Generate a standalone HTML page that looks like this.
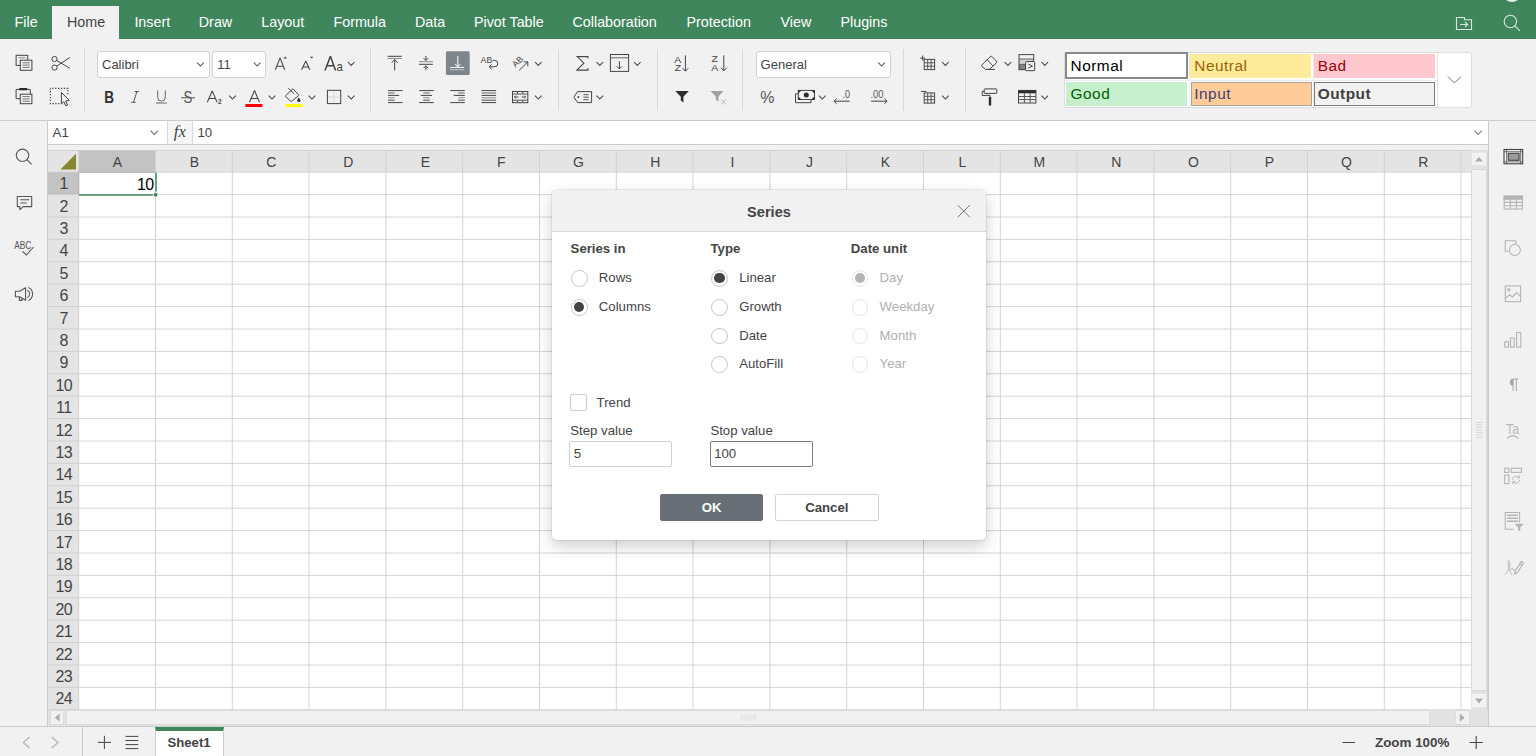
<!DOCTYPE html>
<html lang="en"><head><meta charset="utf-8"><title>Spreadsheet Editor</title>
<style>
*{box-sizing:border-box;margin:0;padding:0}
html,body{width:1536px;height:756px;overflow:hidden;background:#f1f1f1;font-family:"Liberation Sans",sans-serif;font-size:13.2px;color:#444}
.a{position:absolute}
svg{position:absolute;overflow:visible}
#top{left:0;top:0;width:1536px;height:39px;background:#40865c}
#top .tab{position:absolute;top:6px;height:34px;line-height:33.6px;font-size:14.3px;color:#fff;white-space:nowrap}
#top .tab.on{background:#f1f1f1;color:#444}
#tb{left:0;top:39px;width:1536px;height:82px;background:#f1f1f1;border-bottom:1px solid #cbcbcb}
.sep{position:absolute;top:49px;width:1px;height:62px;background:#d8d8d8}
.box{position:absolute;top:51px;height:27px;background:#fff;border:1px solid #d2d2d2;border-radius:3px;font-size:13px;line-height:25.2px;color:#444;padding-left:4px;white-space:nowrap}
.ic{position:absolute;width:24px;height:24px;color:#444}
.ic svg{left:0;top:0}

#styles{left:1064.2px;top:51.6px;width:407.4px;height:56px;background:#fff;border:1px solid #dcdcdc;border-radius:2px}
.st{position:absolute;height:24.4px;width:120.6px;font-size:15.4px;line-height:24.6px;padding-left:3.6px;white-space:nowrap;letter-spacing:.5px}
#fbar{left:48px;top:121px;width:1440px;height:24px;background:#fff;border-bottom:1px solid #cbcbcb}
#lside{left:0;top:121px;width:48px;height:605px;background:#f1f1f1;border-right:1px solid #cbcbcb}
#rside{left:1488px;top:121px;width:48px;height:605px;background:#f1f1f1;border-left:1px solid #cbcbcb}
#status{left:0;top:726px;width:1536px;height:30px;background:#f1f1f1;border-top:1px solid #cbcbcb}
#sheet{left:48px;top:150px;width:1423px;height:560px;background:#fff;overflow:hidden}
.ch{position:absolute;top:0;height:22px;line-height:23px;text-align:center;font-size:15.2px;color:#444;transform:scaleX(.92)}
.rh{position:absolute;left:0.6px;width:30.4px;text-align:center;font-size:16px;color:#444;height:22.4px;line-height:24.2px;letter-spacing:-0.5px}
#dlg{left:551.6px;top:190.4px;width:434.8px;height:349.8px;background:#fff;border-radius:5px;box-shadow:0 6px 16px rgba(0,0,0,.2),0 0 0 1px rgba(0,0,0,.06)}
#dlg .hd{position:absolute;left:0;top:0;width:100%;height:41.4px;background:#f1f1f1;border-bottom:1px solid #d8d8d8;border-radius:5px 5px 0 0;text-align:center;font-weight:bold;font-size:14.6px;line-height:44.6px;color:#444}
#dlg .lb{position:absolute;font-weight:bold;font-size:13.2px;white-space:nowrap;color:#444}
#dlg .tx{position:absolute;font-size:13.2px;white-space:nowrap;color:#444}
#dlg .dis{color:#b0b0b0}
.rad{position:absolute;width:16.8px;height:16.8px;border:1px solid #c6c6c6;border-radius:50%;background:#fff}
.rad.on::after{content:"";position:absolute;left:2.3px;top:2.3px;width:10.2px;height:10.2px;border-radius:50%;background:#444}
.rad.dis{border-color:#e6e6e6}
.rad.dis.on::after{background:#b4b4b4}
.inp{position:absolute;height:26.4px;background:#fff;border:1px solid #cfcfcf;border-radius:2px;font-size:13.2px;line-height:24px;padding-left:3.4px;color:#444}
.btn{position:absolute;height:26.4px;border-radius:2px;font-weight:bold;font-size:13.2px;text-align:center;line-height:25.5px}
</style></head>
<body>
<div id="top" class="a">
<div class="tab" style="left:14.6px">File</div>
<div class="tab on" style="left:52px;width:67px;padding-left:15.0px">Home</div>
<div class="tab" style="left:134.4px">Insert</div>
<div class="tab" style="left:198.8px">Draw</div>
<div class="tab" style="left:261.3px">Layout</div>
<div class="tab" style="left:333.5px">Formula</div>
<div class="tab" style="left:415.0px">Data</div>
<div class="tab" style="left:474.0px">Pivot Table</div>
<div class="tab" style="left:572.5px">Collaboration</div>
<div class="tab" style="left:686.5px">Protection</div>
<div class="tab" style="left:780.5px">View</div>
<div class="tab" style="left:840.5px">Plugins</div>
<svg class="a" style="left:0;top:0" width="1" height="1"><g fill="none" stroke="#d9e7df" stroke-width="1.1"><path d="M1456.5 29.5V17.5H1464.5V19.8H1471.5V29.5Z"/><path d="M1460 24.5H1467.5M1465 22L1467.7 24.5L1465 27"/><circle cx="1510.4" cy="21.5" r="6.2"/><path d="M1514.8 25.9L1519.8 30.9"/></g><ellipse cx="1512" cy="-4" rx="7.5" ry="6" fill="#e9f1ec"/></svg>
</div>
<div id="tb" class="a"></div>
<div class="sep" style="left:84.0px"></div>
<div class="sep" style="left:370.0px"></div>
<div class="sep" style="left:557.6px"></div>
<div class="sep" style="left:656.9px"></div>
<div class="sep" style="left:742.0px"></div>
<div class="sep" style="left:902.9px"></div>
<div class="sep" style="left:964.9px"></div>
<div class="box" style="left:97px;width:112.5px">Calibri</div>
<div class="box" style="left:212.3px;width:54px">11</div>
<div class="box" style="left:755.6px;width:135px">General</div>
<svg class="a" style="left:0;top:0" width="1" height="1" aria-label="toolbar icons"><rect x="16.10" y="55.30" width="11.60" height="10.10" fill="none" stroke="#444" stroke-width="1" /><path d="M18.6 57.8H25.4" fill="none" stroke="#8c8c8c" stroke-width="1" /><rect x="20.30" y="60.20" width="11.60" height="10.10" fill="#f1f1f1" stroke="#444" stroke-width="1" /><path d="M22.5 62.8H29.8M22.5 65.1H29.8M22.5 67.4H29.8" fill="none" stroke="#777" stroke-width="1" /><path d="M20.3 98.7H16.1V89.4H30.3V94" fill="none" stroke="#444" stroke-width="1" /><rect x="19.3" y="88" width="7.9" height="2.3" fill="#2a2a2a"/><rect x="20.30" y="94.20" width="11.60" height="9.50" fill="#f1f1f1" stroke="#444" stroke-width="1" /><path d="M22.5 96.6H29.8M22.5 98.9H29.8M22.5 101.2H29.8" fill="none" stroke="#777" stroke-width="1" /><circle cx="54.5" cy="59" r="2.6" fill="none" stroke="#444"/><circle cx="54.5" cy="67.6" r="2.6" fill="none" stroke="#444"/><path d="M56.7 60.5L69.9 68.3M56.7 66.1L69.9 57.5" fill="none" stroke="#444" stroke-width="1" /><path d="M59.5 103.6H50.4V88.4H67.9V96" fill="none" stroke="#444" stroke-width="1.1" stroke-dasharray="1.3 1.6"/><path d="M61.4 92.4V104L63.9 101.7L65.7 105.8L67.5 105L65.7 101L69.3 100.4Z" fill="#f1f1f1" stroke="#444" stroke-width="1" stroke-linejoin="round"/><path d="M275.3 69.8L280.1 57.9L284.7 69.8M276.75 66.2H283.31" fill="none" stroke="#444" stroke-width="1.05" stroke-linejoin="bevel"/><path d="M283.4 58.4L285.2 56.6L287 58.4Z" fill="#444" /><path d="M301.6 69.8L305.8 61L309.8 69.8M302.98 66.9H308.48" fill="none" stroke="#444" stroke-width="1.05" stroke-linejoin="bevel"/><path d="M309.8 56.8H313.4L311.6 58.6Z" fill="#444" /><path d="M325 70.5L330.4 56.2L335.6 70.5M326.77 65.8H333.89" fill="none" stroke="#444" stroke-width="1.5" stroke-linejoin="bevel"/><text x="336.6" y="70.5" font-family="Liberation Sans" font-size="13.2" font-weight="normal" fill="#444" textLength="6.4" lengthAdjust="spacingAndGlyphs">a</text><path d="M347.90 62.00L351.20 65.40L354.50 62.00" fill="none" stroke="#444" stroke-width="1.05" /><text x="104.2" y="102.5" font-family="Liberation Sans" font-size="16" font-weight="bold" fill="#333" textLength="9.8" lengthAdjust="spacingAndGlyphs">B</text><path d="M134.6 91.6H139M131.3 102.3H135.7M136.9 91.6L133.5 102.3" fill="none" stroke="#555" stroke-width="1" /><path d="M157.7 90.4V97.3A3.8 3.8 0 0 0 165.3 97.3V90.4M156.2 103H166.8" fill="none" stroke="#666" stroke-width="1" /><text x="183.6" y="102.8" font-family="Liberation Sans" font-size="16.6" font-weight="normal" fill="#555" textLength="8.8" lengthAdjust="spacingAndGlyphs">S</text><path d="M181 97.8H195" fill="none" stroke="#555" stroke-width="1" /><path d="M207.3 102.3L212.2 91L217.1 102.3M208.95 98.5H215.45" fill="none" stroke="#444" stroke-width="1.05" stroke-linejoin="bevel"/><text x="217.9" y="103.8" font-family="Liberation Sans" font-size="6.4" font-weight="bold" fill="#444" >2</text><path d="M229.20 95.60L232.50 99.00L235.80 95.60" fill="none" stroke="#444" stroke-width="1.05" /><path d="M249.5 102.3L254.5 90.5L259.5 102.3M251.15 98.4H257.85" fill="none" stroke="#444" stroke-width="1.05" stroke-linejoin="bevel"/><rect x="245.4" y="104" width="17" height="3" fill="#ff0000"/><path d="M268.70 95.60L272.00 99.00L275.30 95.60" fill="none" stroke="#444" stroke-width="1.05" /><path d="M293.4 89.2L298.4 94.6Q299 95.3 298.3 95.9L291.9 101.1Q291.1 101.6 290.5 101L285.8 96.7Q285.2 96.1 285.8 95.5L292.4 89.2Q292.9 88.8 293.4 89.2Z" fill="none" stroke="#444" stroke-width="1" stroke-linejoin="round"/><path d="M288.2 88.1L294.1 93.7" fill="none" stroke="#444" stroke-width="1" /><path d="M298.8 97.6Q300.4 99.6 300.4 100.4A1.6 1.6 0 0 1 297.2 100.4Q297.2 99.6 298.8 97.6Z" fill="#333"/><rect x="285.5" y="104" width="17" height="3.1" fill="#ffff00"/><path d="M308.60 95.60L311.90 99.00L315.20 95.60" fill="none" stroke="#444" stroke-width="1.05" /><rect x="327.40" y="90.30" width="13.30" height="13.30" fill="none" stroke="#444" stroke-width="1" /><path d="M334 91.5V102.5M328.5 97H339.5" fill="none" stroke="#c9c9c9" stroke-width="1" stroke-dasharray="1.6 1.2"/><path d="M347.90 95.60L351.20 99.00L354.50 95.60" fill="none" stroke="#444" stroke-width="1.05" /><path d="M387.7 56.3H401.8" fill="none" stroke="#444" stroke-width="1" /><path d="M387.7 58.5H401.8" fill="none" stroke="#8c8c8c" stroke-width="1" /><path d="M394.7 70.3V59.6M391.8 62.7L394.7 59.6L397.6 62.7" fill="none" stroke="#444" stroke-width="1" /><path d="M419 61.7H432.9" fill="none" stroke="#8c8c8c" stroke-width="1" /><path d="M419 64.3H432.9" fill="none" stroke="#444" stroke-width="1" /><path d="M425.9 56V60.4M423.6 58.2L425.9 60.5L428.2 58.2M425.9 70.3V65.9M423.6 68.1L425.9 65.8L428.2 68.1" fill="none" stroke="#444" stroke-width="1" /><rect x="445.9" y="51.2" width="23.8" height="23.8" rx="1.5" fill="#7d858d"/><path d="M457.8 56V66.8M454.9 63.8L457.8 66.9L460.7 63.8" fill="none" stroke="#fff" stroke-width="1" /><path d="M450.1 67.4H464.1" fill="none" stroke="#fff" stroke-width="1" /><path d="M450.1 69.8H464.1" fill="none" stroke="#c5c9cd" stroke-width="1" /><text x="480.6" y="62.8" font-family="Liberation Sans" font-size="8.6" font-weight="normal" fill="#444" textLength="11.6" lengthAdjust="spacingAndGlyphs">AB</text><path d="M492.6 60.4H494.6A3.2 3.2 0 0 1 494.6 66.8H489.4M491.8 64.3L489.2 66.8L491.8 69.3" fill="none" stroke="#444" stroke-width="1" /><g transform="rotate(-45 517.6 61.6)"><text x="511.8" y="64.6" font-family="Liberation Sans" font-size="8.6" font-weight="normal" fill="#444" textLength="11.6" lengthAdjust="spacingAndGlyphs">AB</text></g><path d="M519.2 70.3L527.6 62.1M523.6 61.9H527.8V66.1" fill="none" stroke="#444" stroke-width="1" /><path d="M535.00 62.00L538.30 65.40L541.60 62.00" fill="none" stroke="#444" stroke-width="1.05" /><path d="M388.0 90.6H402.5" fill="none" stroke="#444" stroke-width="1" /><path d="M388.0 93.0H394.5" fill="none" stroke="#666" stroke-width="1" /><path d="M388.0 95.4H399.2" fill="none" stroke="#444" stroke-width="1" /><path d="M388.0 97.8H394.5" fill="none" stroke="#8c8c8c" stroke-width="1" /><path d="M388.0 100.2H394.5" fill="none" stroke="#555" stroke-width="1" /><path d="M388.0 102.6H402.5" fill="none" stroke="#444" stroke-width="1" /><path d="M419.2 90.6H433.7" fill="none" stroke="#444" stroke-width="1" /><path d="M423.2 93.0H429.7" fill="none" stroke="#666" stroke-width="1" /><path d="M420.8 95.4H432.1" fill="none" stroke="#444" stroke-width="1" /><path d="M423.2 97.8H429.7" fill="none" stroke="#8c8c8c" stroke-width="1" /><path d="M423.2 100.2H429.7" fill="none" stroke="#555" stroke-width="1" /><path d="M419.2 102.6H433.7" fill="none" stroke="#444" stroke-width="1" /><path d="M450.3 90.6H464.8" fill="none" stroke="#444" stroke-width="1" /><path d="M458.3 93.0H464.8" fill="none" stroke="#666" stroke-width="1" /><path d="M453.6 95.4H464.8" fill="none" stroke="#444" stroke-width="1" /><path d="M458.3 97.8H464.8" fill="none" stroke="#8c8c8c" stroke-width="1" /><path d="M458.3 100.2H464.8" fill="none" stroke="#555" stroke-width="1" /><path d="M450.3 102.6H464.8" fill="none" stroke="#444" stroke-width="1" /><path d="M481.6 90.6H496.1" fill="none" stroke="#444" stroke-width="1" /><path d="M481.6 93.0H496.1" fill="none" stroke="#666" stroke-width="1" /><path d="M481.6 95.4H496.1" fill="none" stroke="#444" stroke-width="1" /><path d="M481.6 97.8H496.1" fill="none" stroke="#8c8c8c" stroke-width="1" /><path d="M481.6 100.2H496.1" fill="none" stroke="#555" stroke-width="1" /><path d="M481.6 102.6H496.1" fill="none" stroke="#444" stroke-width="1" /><rect x="512.50" y="91.50" width="15.30" height="11.20" fill="none" stroke="#444" stroke-width="1" /><path d="M512.5 94H527.8M512.5 100.2H527.8M517.5 91.5V94M522.8 91.5V94M517.5 100.2V102.7M522.8 100.2V102.7" fill="none" stroke="#555" stroke-width="1" /><path d="M514.4 97H518.6M521.4 97H525.6M515.8 95.6L514.4 97L515.8 98.4M524.2 95.6L525.6 97L524.2 98.4" fill="none" stroke="#444" stroke-width="0.9" /><path d="M535.00 95.60L538.30 99.00L541.60 95.60" fill="none" stroke="#444" stroke-width="1.05" /><path d="M588 58.6V56.6H577.2L583.9 63.2L576.8 70.1H588V68" fill="none" stroke="#444" stroke-width="1.05" stroke-linejoin="miter"/><path d="M596.50 62.00L599.80 65.40L603.10 62.00" fill="none" stroke="#444" stroke-width="1.05" /><rect x="610.40" y="54.50" width="18.20" height="16.90" fill="none" stroke="#444" stroke-width="1" /><path d="M610.4 57.8H628.6" fill="none" stroke="#666" stroke-width="1" /><path d="M619.4 61.2V68.8M616.9 66.4L619.4 68.9L621.9 66.4" fill="none" stroke="#444" stroke-width="1" /><path d="M634.00 62.00L637.30 65.40L640.60 62.00" fill="none" stroke="#444" stroke-width="1.05" /><path d="M577.6 91.6H591.6V102.6H577.6L573.9 97.1Z" fill="none" stroke="#444" stroke-width="1" stroke-linejoin="round"/><circle cx="578.3" cy="97.1" r="1" fill="#444"/><path d="M583.4 94.7H588.7M583.4 97.2H588.7M583.4 99.7H588.7" fill="none" stroke="#555" stroke-width="1" /><path d="M596.50 95.60L599.80 99.00L603.10 95.60" fill="none" stroke="#444" stroke-width="1.05" /><text x="674.3" y="62.5" font-family="Liberation Sans" font-size="8.8" font-weight="normal" fill="#444" textLength="7" lengthAdjust="spacingAndGlyphs">A</text><text x="674.7" y="71.4" font-family="Liberation Sans" font-size="8.8" font-weight="normal" fill="#444" textLength="6.4" lengthAdjust="spacingAndGlyphs">Z</text><path d="M685.4 55.4V71M682.5 68.2L685.4 71.2L688.3 68.2" fill="none" stroke="#444" stroke-width="1" /><text x="711.6" y="62.3" font-family="Liberation Sans" font-size="8.8" font-weight="normal" fill="#444" textLength="6.4" lengthAdjust="spacingAndGlyphs">Z</text><text x="711.2" y="71.2" font-family="Liberation Sans" font-size="8.8" font-weight="normal" fill="#444" textLength="7" lengthAdjust="spacingAndGlyphs">A</text><path d="M723.8 55.4V70.6M720.9 67.8L723.8 70.8L726.7 67.8" fill="none" stroke="#444" stroke-width="1" /><path d="M675.3 90.9H688.8L683.4 96.8V102.4L680.8 100.4V96.8Z" fill="#2d2d2d" /><path d="M710.5 90.9H723.6L718.4 96.6V101.4L715.8 99.6V96.6Z" fill="#a0a0a0" /><path d="M721.2 99.6L725.8 104.2M725.8 99.6L721.2 104.2" fill="none" stroke="#b4b4b4" stroke-width="1" /><text x="760.2" y="103" font-family="Liberation Sans" font-size="16.4" font-weight="normal" fill="#555" textLength="14.2" lengthAdjust="spacingAndGlyphs">%</text><path d="M798.3 93.8H795.5V102.7H811V99.6" fill="none" stroke="#444" stroke-width="1" /><rect x="798.30" y="90.40" width="16.20" height="9.10" fill="#f1f1f1" stroke="#444" stroke-width="1" /><path d="M798.3 90.4H801.5L798.3 93.4ZM814.5 90.4H811.3L814.5 93.4ZM798.3 99.5H801.5L798.3 96.5ZM814.5 99.5H811.3L814.5 96.5Z" fill="#2d2d2d" /><ellipse cx="806.3" cy="95" rx="2.5" ry="2.5" fill="#2d2d2d"/><path d="M819.00 95.60L822.30 99.00L825.60 95.60" fill="none" stroke="#444" stroke-width="1.05" /><text x="842.6" y="97.7" font-family="Liberation Sans" font-size="10" font-weight="normal" fill="#555" textLength="7.6" lengthAdjust="spacingAndGlyphs">.0</text><path d="M849.6 101.2H834M836.7 98.5L833.9 101.2L836.7 103.9" fill="none" stroke="#444" stroke-width="1" /><text x="870.4" y="97.7" font-family="Liberation Sans" font-size="10" font-weight="normal" fill="#555" textLength="13" lengthAdjust="spacingAndGlyphs">.00</text><path d="M871.1 101.2H887M884.3 98.5L887.1 101.2L884.3 103.9" fill="none" stroke="#444" stroke-width="1" /><rect x="924.20" y="59.40" width="10.40" height="10.20" fill="none" stroke="#444" stroke-width="1" /><path d="M924.2 62.8H934.6M924.2 66.2H934.6M927.7 59.4V69.6M931.1 59.4V69.6" fill="none" stroke="#555" stroke-width="1" /><path d="M920.2 58.1H925.2M922.7 55.6V60.6" fill="none" stroke="#444" stroke-width="1" /><path d="M942.10 62.00L945.40 65.40L948.70 62.00" fill="none" stroke="#444" stroke-width="1.05" /><rect x="924.20" y="92.90" width="10.40" height="10.20" fill="none" stroke="#444" stroke-width="1" /><path d="M924.2 96.3H934.6M924.2 99.7H934.6M927.7 92.9V103.10000000000001M931.1 92.9V103.10000000000001" fill="none" stroke="#555" stroke-width="1" /><path d="M921 91.4H926.4" fill="none" stroke="#444" stroke-width="1" /><path d="M942.10 95.60L945.40 99.00L948.70 95.60" fill="none" stroke="#444" stroke-width="1.05" /><path d="M990.4 56.6Q991.3 55.8 992.2 56.7L996.4 61.1Q997.2 62 996.4 62.9L989.4 69.4H985.4L982 66.6Q981.1 65.7 982 64.8Z" fill="none" stroke="#444" stroke-width="1" stroke-linejoin="round"/><path d="M987.2 59.7L992.8 65.8M988 69.4H994.8" fill="none" stroke="#444" stroke-width="1" /><path d="M1004.60 62.00L1007.90 65.40L1011.20 62.00" fill="none" stroke="#444" stroke-width="1.05" /><rect x="1019" y="59" width="14.7" height="5.4" fill="#d0d0d0"/><rect x="1019" y="64.4" width="14.7" height="5.3" fill="#808080"/><rect x="1019.00" y="54.60" width="14.70" height="15.10" fill="none" stroke="#444" stroke-width="1" /><path d="M1019 59H1033.7M1019 64.4H1033.7" fill="none" stroke="#666" stroke-width="1" /><rect x="1025.60" y="61.60" width="9.10" height="9.10" fill="#f1f1f1" stroke="#444" stroke-width="1" rx="0.8"/><path d="M1028.2 64L1032.4 66.1L1028.2 68.2" fill="none" stroke="#444" stroke-width="1" /><path d="M1041.50 62.00L1044.80 65.40L1048.10 62.00" fill="none" stroke="#444" stroke-width="1.05" /><rect x="984.20" y="88.90" width="12.60" height="4.50" fill="none" stroke="#444" stroke-width="1" rx="0.6"/><path d="M984.2 91.4H982.2V95.4H990V97.4" fill="none" stroke="#444" stroke-width="1" /><rect x="988.8" y="97" width="2.4" height="8.6" rx="0.6" fill="#2d2d2d"/><rect x="1018.50" y="90.40" width="17.40" height="12.60" fill="none" stroke="#444" stroke-width="1" /><rect x="1018.5" y="90.4" width="17.4" height="2.9" fill="#2d2d2d"/><path d="M1018.5 96.5H1035.9M1018.5 99.6H1035.9M1024.4 93.2V103M1030.1 93.2V103" fill="none" stroke="#555" stroke-width="1" /><path d="M1041.50 95.60L1044.80 99.00L1048.10 95.60" fill="none" stroke="#444" stroke-width="1.05" /></svg>
<svg class="a" style="left:0;top:0" width="1" height="1"><path d="M197.20 62.70L200.50 66.10L203.80 62.70" fill="none" stroke="#555" stroke-width="1.05" /><path d="M253.90 62.70L257.20 66.10L260.50 62.70" fill="none" stroke="#555" stroke-width="1.05" /><path d="M878.30 62.70L881.60 66.10L884.90 62.70" fill="none" stroke="#555" stroke-width="1.05" /></svg>
<div id="styles" class="a">
<div class="st" style="left:0.2px;top:-0.2px;width:122.6px;height:26.6px;background:#fff;color:#000;font-weight:normal;padding-left:3.2px;line-height:24.2px;border:2px solid #8a8a8a">Normal</div>
<div class="st" style="left:125.2px;top:1.4px;width:120.8px;height:23.6px;background:#ffeb9c;color:#9c6500;font-weight:normal;padding-left:3.9px;line-height:24.0px">Neutral</div>
<div class="st" style="left:248.6px;top:1.4px;width:120.8px;height:23.6px;background:#ffc7ce;color:#9c0006;font-weight:normal;padding-left:3.9px;line-height:24.0px">Bad</div>
<div class="st" style="left:1.2px;top:29px;width:120.4px;height:24.2px;background:#c6efce;color:#006100;font-weight:normal;padding-left:4.2px;line-height:24.4px">Good</div>
<div class="st" style="left:125.4px;top:29.4px;width:121px;height:24px;background:#ffcc99;color:#3f3f76;font-weight:normal;padding-left:2.7px;line-height:21.6px;border:1px solid #a3a3a3">Input</div>
<div class="st" style="left:248.8px;top:29.4px;width:121px;height:24px;background:#f2f2f2;color:#3f3f3f;font-weight:bold;padding-left:2.7px;line-height:21.6px;border:1px solid #7a7a7a">Output</div>
<div class="a" style="left:371.6px;top:0;width:1px;height:54px;background:#e2e2e2"></div>
<div class="a" style="left:0;top:27.4px;width:372px;height:1px;background:#ececec"></div>
<div class="a" style="left:123.9px;top:0;width:1px;height:54px;background:#ececec"></div>
<div class="a" style="left:247.4px;top:0;width:1px;height:54px;background:#ececec"></div>
</div>
<svg class="a" style="left:0;top:0" width="1" height="1"><path d="M1447.90 76.55L1454.40 83.05L1460.90 76.55" fill="none" stroke="#7a7a7a" stroke-width="1"/></svg>
<div id="fbar" class="a"><div class="a" style="left:4.6px;top:0;line-height:23px;font-size:13.2px">A1</div><div class="a" style="left:119px;top:0;width:26px;height:23px;background:#f6f6f6;border-left:1px solid #d8d8d8;border-right:1px solid #d8d8d8;text-align:center;font-family:'Liberation Serif',serif;font-style:italic;font-size:17px;line-height:21px">fx</div><div class="a" style="left:149.4px;top:0;line-height:23px;font-size:13.2px">10</div></div>
<svg class="a" style="left:0;top:0" width="1" height="1"><path d="M150.60 130.70L154.20 134.50L157.80 130.70" fill="none" stroke="#666" stroke-width="1.05"/></svg>
<svg class="a" style="left:0;top:0" width="1" height="1"><path d="M1474.60 130.70L1478.20 134.50L1481.80 130.70" fill="none" stroke="#777" stroke-width="1.05"/></svg>
<div id="lside" class="a"></div>
<div id="rside" class="a"></div>
<svg class="a" style="left:0;top:0" width="1" height="1"><g fill="none" stroke="#555" stroke-width="1.1"><circle cx="22.5" cy="155.3" r="6.2"/><path d="M26.9 159.7L31.6 164.4"/><path stroke-linejoin="round" d="M17.3 196.5H31.7V206.6H23.2L19.8 209.6V206.6H17.3Z"/><path d="M20.3 199.8H29.2M20.3 203H26.6"/><path d="M22.4 251.4L26.4 255L33.6 247"/><path stroke-linejoin="round" d="M15.4 291.3H19.4L25.6 287.8V300.2L19.4 296.8H15.4Z"/><path d="M19.4 297V300.4H22V298.2"/><path d="M27.4 290.3A4.2 4.2 0 0 1 27.4 297.7M28.4 287.6A7 7 0 0 1 28.4 300.4"/></g><text x="14.2" y="249.3" font-family="Liberation Sans" font-size="10.2" fill="#555" textLength="17.2" lengthAdjust="spacingAndGlyphs">ABC</text><g fill="none" stroke="#444" stroke-width="1.1"><rect x="1504" y="149.5" width="18.7" height="14.3"/><path d="M1504 151.7H1522.7M1504 161.9H1522.7M1506.6 149.5V163.8M1520.6 149.5V163.8" stroke-width="0.7"/><rect x="1508.3" y="153.3" width="10.8" height="7" fill="#9a9a9a"/></g><g fill="none" stroke="#b4b4b4" stroke-width="1.1"><rect x="1504.2" y="196.2" width="18.2" height="12.8"/><rect x="1504.2" y="196.2" width="18.2" height="3" fill="#b4b4b4"/><path d="M1504.2 202.4H1522.4M1504.2 205.7H1522.4M1510.3 199V209M1516.4 199V209"/><path d="M1508.6 251.3H1505.3V240.7H1515.8V244"/><circle cx="1514.9" cy="250" r="5.5"/><rect x="1505.3" y="285.9" width="15.3" height="15.8"/><circle cx="1508.8" cy="289.8" r="1.2"/><path d="M1505.3 298.5L1509.6 294.8L1512.4 297L1516.6 292.6L1520.6 296.6"/><rect x="1504.7" y="341.8" width="3.7" height="5.3"/><rect x="1510.5" y="338" width="3.7" height="9.1"/><rect x="1516.6" y="332.5" width="4.2" height="14.6"/><path d="M1507 438.4Q1512.8 432.8 1518.5 438.4"/><rect x="1504.7" y="468.2" width="4.2" height="4.2"/><rect x="1511.2" y="468.2" width="10.2" height="4.2"/><rect x="1504.7" y="475.2" width="4.2" height="8.4"/><path d="M1512.6 479.8A3.6 3.6 0 0 1 1519 477.4M1519.6 479.6A3.6 3.6 0 0 1 1513.2 482M1519.4 475.2V477.8H1516.8M1512.8 484.2V481.6H1515.4" stroke-width="0.9"/><path d="M1514 529.2H1505.3V512.5H1519.6V522.5"/><path d="M1507 515.3H1518M1507 518.3H1518M1507 521.3H1518" stroke-width="1.6"/><path d="M1514.8 523.8H1523.6L1520.2 527.4V531.6L1518.2 530.2V527.4Z" fill="#b4b4b4" stroke="none"/><path d="M1505 574.5C1508 572 1510.4 566 1509.6 561.6C1509.2 559.6 1507.8 560.4 1508 562.6C1508.4 567 1510 572 1512.2 575.4M1510 570.2L1512.4 567.8L1513.6 570.6L1515.4 569.4" stroke-width="0.9"/><path d="M1514.6 574.2L1515.4 570.6L1521.4 561.4L1523.6 563L1517.6 572.2Z" stroke-linejoin="round"/><path d="M1519.8 563.6L1522 565.2"/></g><path d="M1513 386.2A4 4 0 0 1 1513 378.4H1518.2V379.4H1516.8V391H1515.8V379.4H1513.6V391H1512.6V386.2Z" fill="#a6a6a6"/><text x="1506" y="433.5" font-family="Liberation Sans" font-size="14" fill="#b9b9b9" textLength="13.2" lengthAdjust="spacingAndGlyphs">Ta</text></svg>
<div id="sheet" class="a">
<div class="a" style="left:0;top:0;width:1423px;height:22.4px;background:#e4e4e4"></div>
<div class="a" style="left:0;top:0;width:30.6px;height:560px;background:#e4e4e4"></div>
<div class="a" style="left:30.7px;top:0;width:76.8px;height:22.4px;background:#c3c3c3"></div>
<div class="a" style="left:0;top:22.2px;width:30.6px;height:22.4px;background:#c3c3c3"></div>
<svg class="a" style="left:0;top:0" width="1423" height="560"><path d="M30.7 0V560M107.5 0V560M184.3 0V560M261.1 0V560M337.9 0V560M414.7 0V560M491.5 0V560M568.3 0V560M645.1 0V560M721.9 0V560M798.7 0V560M875.5 0V560M952.3 0V560M1029.1 0V560M1105.9 0V560M1182.7 0V560M1259.5 0V560M1336.3 0V560M1413.1 0V560M0 22.2H1423M0 44.6H1423M0 67.0H1423M0 89.4H1423M0 111.8H1423M0 134.2H1423M0 156.6H1423M0 179.0H1423M0 201.4H1423M0 223.8H1423M0 246.2H1423M0 268.6H1423M0 291.0H1423M0 313.4H1423M0 335.8H1423M0 358.2H1423M0 380.6H1423M0 403.0H1423M0 425.4H1423M0 447.8H1423M0 470.2H1423M0 492.6H1423M0 515.0H1423M0 537.4H1423M0 559.8H1423" stroke="#cfcfcf" stroke-width="0.9" fill="none"/><path d="M0 0.3H1423" stroke="#cdcdcd" stroke-width="1" fill="none"/><path d="M30.7 22.2H107.5M30.7 22.2V44.6" stroke="#acacac" stroke-width="1" fill="none"/><path d="M28 3.8V19.6H12.4Z" fill="#86862f"/><path d="M108 22.8V41.6M31.1 45H104.8" stroke="#40865c" stroke-width="1.5" fill="none"/><rect x="105.3" y="42.8" width="4.5" height="4" fill="#3f7d58" stroke="#fff" stroke-width="0.7"/></svg>
<div class="ch" style="left:31.4px;width:76.8px">A</div><div class="ch" style="left:108.2px;width:76.8px">B</div><div class="ch" style="left:185.0px;width:76.8px">C</div><div class="ch" style="left:261.8px;width:76.8px">D</div><div class="ch" style="left:338.6px;width:76.8px">E</div><div class="ch" style="left:415.4px;width:76.8px">F</div><div class="ch" style="left:492.2px;width:76.8px">G</div><div class="ch" style="left:569.0px;width:76.8px">H</div><div class="ch" style="left:645.8px;width:76.8px">I</div><div class="ch" style="left:722.6px;width:76.8px">J</div><div class="ch" style="left:799.4px;width:76.8px">K</div><div class="ch" style="left:876.2px;width:76.8px">L</div><div class="ch" style="left:953.0px;width:76.8px">M</div><div class="ch" style="left:1029.8px;width:76.8px">N</div><div class="ch" style="left:1106.6px;width:76.8px">O</div><div class="ch" style="left:1183.4px;width:76.8px">P</div><div class="ch" style="left:1260.2px;width:76.8px">Q</div><div class="ch" style="left:1337.0px;width:76.8px">R</div>
<div class="rh" style="top:22.2px">1</div><div class="rh" style="top:44.6px">2</div><div class="rh" style="top:67.0px">3</div><div class="rh" style="top:89.4px">4</div><div class="rh" style="top:111.8px">5</div><div class="rh" style="top:134.2px">6</div><div class="rh" style="top:156.6px">7</div><div class="rh" style="top:179.0px">8</div><div class="rh" style="top:201.4px">9</div><div class="rh" style="top:223.8px">10</div><div class="rh" style="top:246.2px">11</div><div class="rh" style="top:268.6px">12</div><div class="rh" style="top:291.0px">13</div><div class="rh" style="top:313.4px">14</div><div class="rh" style="top:335.8px">15</div><div class="rh" style="top:358.2px">16</div><div class="rh" style="top:380.6px">17</div><div class="rh" style="top:403.0px">18</div><div class="rh" style="top:425.4px">19</div><div class="rh" style="top:447.8px">20</div><div class="rh" style="top:470.2px">21</div><div class="rh" style="top:492.6px">22</div><div class="rh" style="top:515.0px">23</div><div class="rh" style="top:537.4px">24</div>
<div class="a" style="left:30.7px;top:22.2px;width:75.2px;height:22.4px;line-height:26.2px;text-align:right;font-size:16px;color:#000;letter-spacing:-0.4px">10</div>
</div>
<div class="a" style="left:1471px;top:150px;width:17px;height:560px;background:#e2e2e2;border-right:1.5px solid #d4d4d4"></div>
<div class="a" style="left:1471.3px;top:151.6px;width:15.4px;height:14.8px;background:#f3f3f3;border:1px solid #e6e6e6;border-radius:1px"></div>
<div class="a" style="left:1471.3px;top:168.6px;width:15.4px;height:522.6px;background:#f1f1f1;border:1px solid #d8d8d8;border-radius:1px"></div>
<div class="a" style="left:1471.3px;top:693.3px;width:15.4px;height:15.2px;background:#f3f3f3;border:1px solid #e6e6e6;border-radius:1px"></div>
<div class="a" style="left:48px;top:710px;width:1440px;height:16px;background:#e2e2e2"></div>
<div class="a" style="left:49.7px;top:710.4px;width:14.4px;height:14.6px;background:#f1f1f1;border:1px solid #dcdcdc;border-radius:1px"></div>
<div class="a" style="left:66.2px;top:710.4px;width:1364.3px;height:14.6px;background:#f1f1f1;border:1px solid #dcdcdc;border-radius:1px"></div>
<div class="a" style="left:1454.6px;top:710.4px;width:15px;height:14.6px;background:#f1f1f1;border:1px solid #dcdcdc;border-radius:1px"></div>
<svg class="a" style="left:0;top:0" width="1" height="1"><g fill="#adadad"><path d="M1475 161.6L1479 156.8L1483 161.6Z"/><path d="M1475 698.6L1479 703.4L1483 698.6Z"/><path d="M59.6 713.6L54.8 717.7L59.6 721.8Z"/><path d="M1459.8 713.6L1464.6 717.7L1459.8 721.8Z"/></g><path d="M741.6 714.4V720.8M744.0 714.4V720.8M746.3 714.4V720.8M748.6 714.4V720.8M751.0 714.4V720.8M753.4 714.4V720.8M755.7 714.4V720.8" stroke="#dcdcdc" stroke-width="1"/><path d="M1476 422.5H1482.3M1476 424.9H1482.3M1476 427.4H1482.3M1476 429.9H1482.3M1476 432.4H1482.3M1476 434.8H1482.3M1476 437.3H1482.3" stroke="#d6d6d6" stroke-width="1"/></svg>
<div id="status" class="a">
<div class="a" style="left:81.5px;top:0;width:1px;height:29px;background:#cbcbcb"></div>
<div class="a" style="left:154.5px;top:0px;width:69px;height:30px;background:#fff;border-left:1px solid #cbcbcb;border-right:1px solid #cbcbcb;border-top:4.6px solid #40865c;text-align:center;font-weight:bold;font-size:13.2px;line-height:23.6px">Sheet1</div>
<div class="a" style="left:1375px;top:0;font-weight:bold;font-size:13.4px;line-height:31px;white-space:nowrap">Zoom 100%</div>
</div>
<svg class="a" style="left:0;top:0" width="1" height="1"><g fill="none" stroke-width="1.1"><path stroke="#b0b0b0" d="M29.6 737L23.2 742.5L29.6 748M51.7 737L58.1 742.5L51.7 748"/><path stroke="#444" stroke-width="1" d="M97.8 742.4H111M104.4 735.8V749M125.5 736.4H138.3M125.5 740.5H138.3M125.5 744.6H138.3M125.5 748.6H138.3"/><path stroke="#444" d="M1342.5 742.5H1355M1469.6 742.5H1482.8M1476.2 735.9V749.1"/></g></svg>
<div id="dlg" class="a">
<div class="hd">Series</div>
<svg class="a" style="left:0;top:0" width="1" height="1"><path d="M405.8 15.2L417.8 27.2M417.8 15.2L405.8 27.2" stroke="#777" stroke-width="1" fill="none"/></svg>
<div class="lb" style="left:19.0px;top:50.5px;line-height:16px">Series in</div>
<div class="lb" style="left:158.9px;top:50.5px;line-height:16px">Type</div>
<div class="lb" style="left:299.2px;top:50.5px;line-height:16px">Date unit</div>
<div class="rad" style="left:19.2px;top:79.5px"></div><div class="tx" style="left:47.2px;top:79.5px;line-height:16px">Rows</div>
<div class="rad on" style="left:19.2px;top:108.4px"></div><div class="tx" style="left:47.2px;top:108.4px;line-height:16px">Columns</div>
<div class="rad on" style="left:159.6px;top:79.5px"></div><div class="tx" style="left:187.6px;top:79.5px;line-height:16px">Linear</div>
<div class="rad" style="left:159.6px;top:108.4px"></div><div class="tx" style="left:187.6px;top:108.4px;line-height:16px">Growth</div>
<div class="rad" style="left:159.6px;top:137.3px"></div><div class="tx" style="left:187.6px;top:137.3px;line-height:16px">Date</div>
<div class="rad" style="left:159.6px;top:166.1px"></div><div class="tx" style="left:187.6px;top:166.1px;line-height:16px">AutoFill</div>
<div class="rad on dis" style="left:300.0px;top:79.5px"></div><div class="tx dis" style="left:328.0px;top:79.5px;line-height:16px">Day</div>
<div class="rad dis" style="left:300.0px;top:108.4px"></div><div class="tx dis" style="left:328.0px;top:108.4px;line-height:16px">Weekday</div>
<div class="rad dis" style="left:300.0px;top:137.3px"></div><div class="tx dis" style="left:328.0px;top:137.3px;line-height:16px">Month</div>
<div class="rad dis" style="left:300.0px;top:166.1px"></div><div class="tx dis" style="left:328.0px;top:166.1px;line-height:16px">Year</div>
<div class="a" style="left:18.7px;top:203.9px;width:16.4px;height:16.4px;border:1px solid #cdcdcd;border-radius:2px;background:#fff"></div><div class="tx" style="left:45.0px;top:204.6px;line-height:16px">Trend</div>
<div class="tx" style="left:18.7px;top:232.2px;line-height:16px">Step value</div>
<div class="tx" style="left:158.8px;top:232.2px;line-height:16px">Stop value</div>
<div class="inp" style="left:17.8px;top:250.4px;width:102.8px">5</div>
<div class="inp" style="left:158.2px;top:250.4px;width:102.8px;border-color:#7c7c7c">100</div>
<div class="btn" style="left:108.3px;top:303.8px;width:103.3px;background:#686f76;color:#fff;border:1px solid #686f76">OK</div>
<div class="btn" style="left:223.4px;top:303.8px;width:103.7px;background:#fff;color:#444;border:1px solid #d4d4d4">Cancel</div>
</div>
</body></html>
